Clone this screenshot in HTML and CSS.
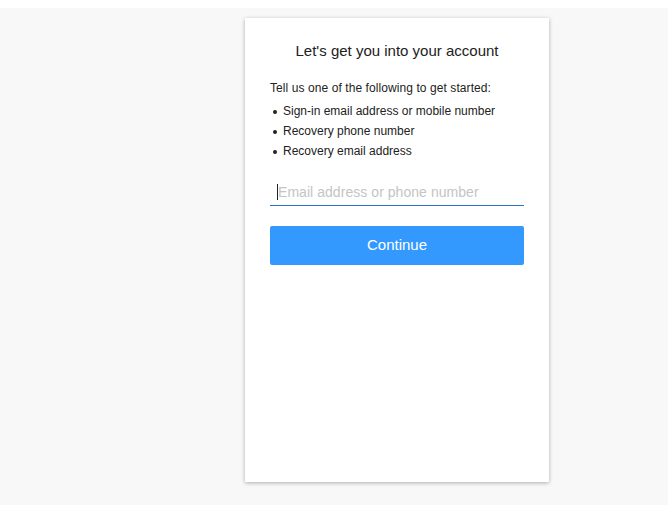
FILE: index.html
```html
<!DOCTYPE html>
<html>
<head>
<meta charset="utf-8">
<link rel="stylesheet" href="styles.css">
</head>
<body>
<div class="page">
  <div class="card">
    <h1 class="title">Let's get you into your account</h1>
    <p class="intro">Tell us one of the following to get started:</p>
    <ul class="options">
      <li>Sign-in email address or mobile number</li>
      <li>Recovery phone number</li>
      <li>Recovery email address</li>
    </ul>
    <div class="field">
      <span class="caret"></span><span class="placeholder">Email address or phone number</span>
    </div>
    <button class="continue">Continue</button>
  </div>
</div>
</body>
</html>
```
FILE: styles.css
```css
html, body {
  margin: 0;
  padding: 0;
  background: #ffffff;
  font-family: "Liberation Sans", Arial, sans-serif;
  color: #222;
}
.page {
  margin-top: 8px;
  min-height: calc(100vh - 8px);
  background: #f8f8f8;
  padding: 10px 0 0 245px;
  box-sizing: border-box;
}
.card {
  width: 304px;
  height: 464px;
  background: #fff;
  box-shadow: 0 1px 4px rgba(0,0,0,0.3);
  padding: 24px 25px 0 25px;
  box-sizing: border-box;
}
.title {
  margin: 0;
  font-size: 15px;
  font-weight: normal;
  text-align: center;
  line-height: 18px;
  color: #222;
}
.intro {
  margin: 20px 0 0 0;
  font-size: 12px;
  line-height: 16px;
  letter-spacing: 0.08px;
  color: #222;
}
.options {
  list-style: none;
  margin: 5px 0 0 0;
  padding: 0;
  font-size: 12px;
}
.options li {
  line-height: 20px;
  padding-left: 13px;
  position: relative;
}
.options li::before {
  content: "";
  position: absolute;
  left: 3px;
  top: 9px;
  width: 4px;
  height: 4px;
  border-radius: 50%;
  background: #222;
}
.field {
  margin-top: 20px;
  height: 25px;
  padding-bottom: 2px;
  box-sizing: border-box;
  border-bottom: 1px solid #2a72c4;
  display: flex;
  align-items: center;
  padding-left: 7px;
  font-size: 14px;
}
.caret {
  width: 1px;
  height: 16px;
  background: #222;
}
.placeholder {
  color: #c4c4c4;
  letter-spacing: 0.05px;
}
.continue {
  display: block;
  margin-top: 20px;
  width: 254px;
  height: 39px;
  border: none;
  border-radius: 2px;
  background: #3399ff;
  color: #fff;
  font-family: "Liberation Sans", Arial, sans-serif;
  font-size: 15px;
  padding: 0 0 2px 0;
}
```
